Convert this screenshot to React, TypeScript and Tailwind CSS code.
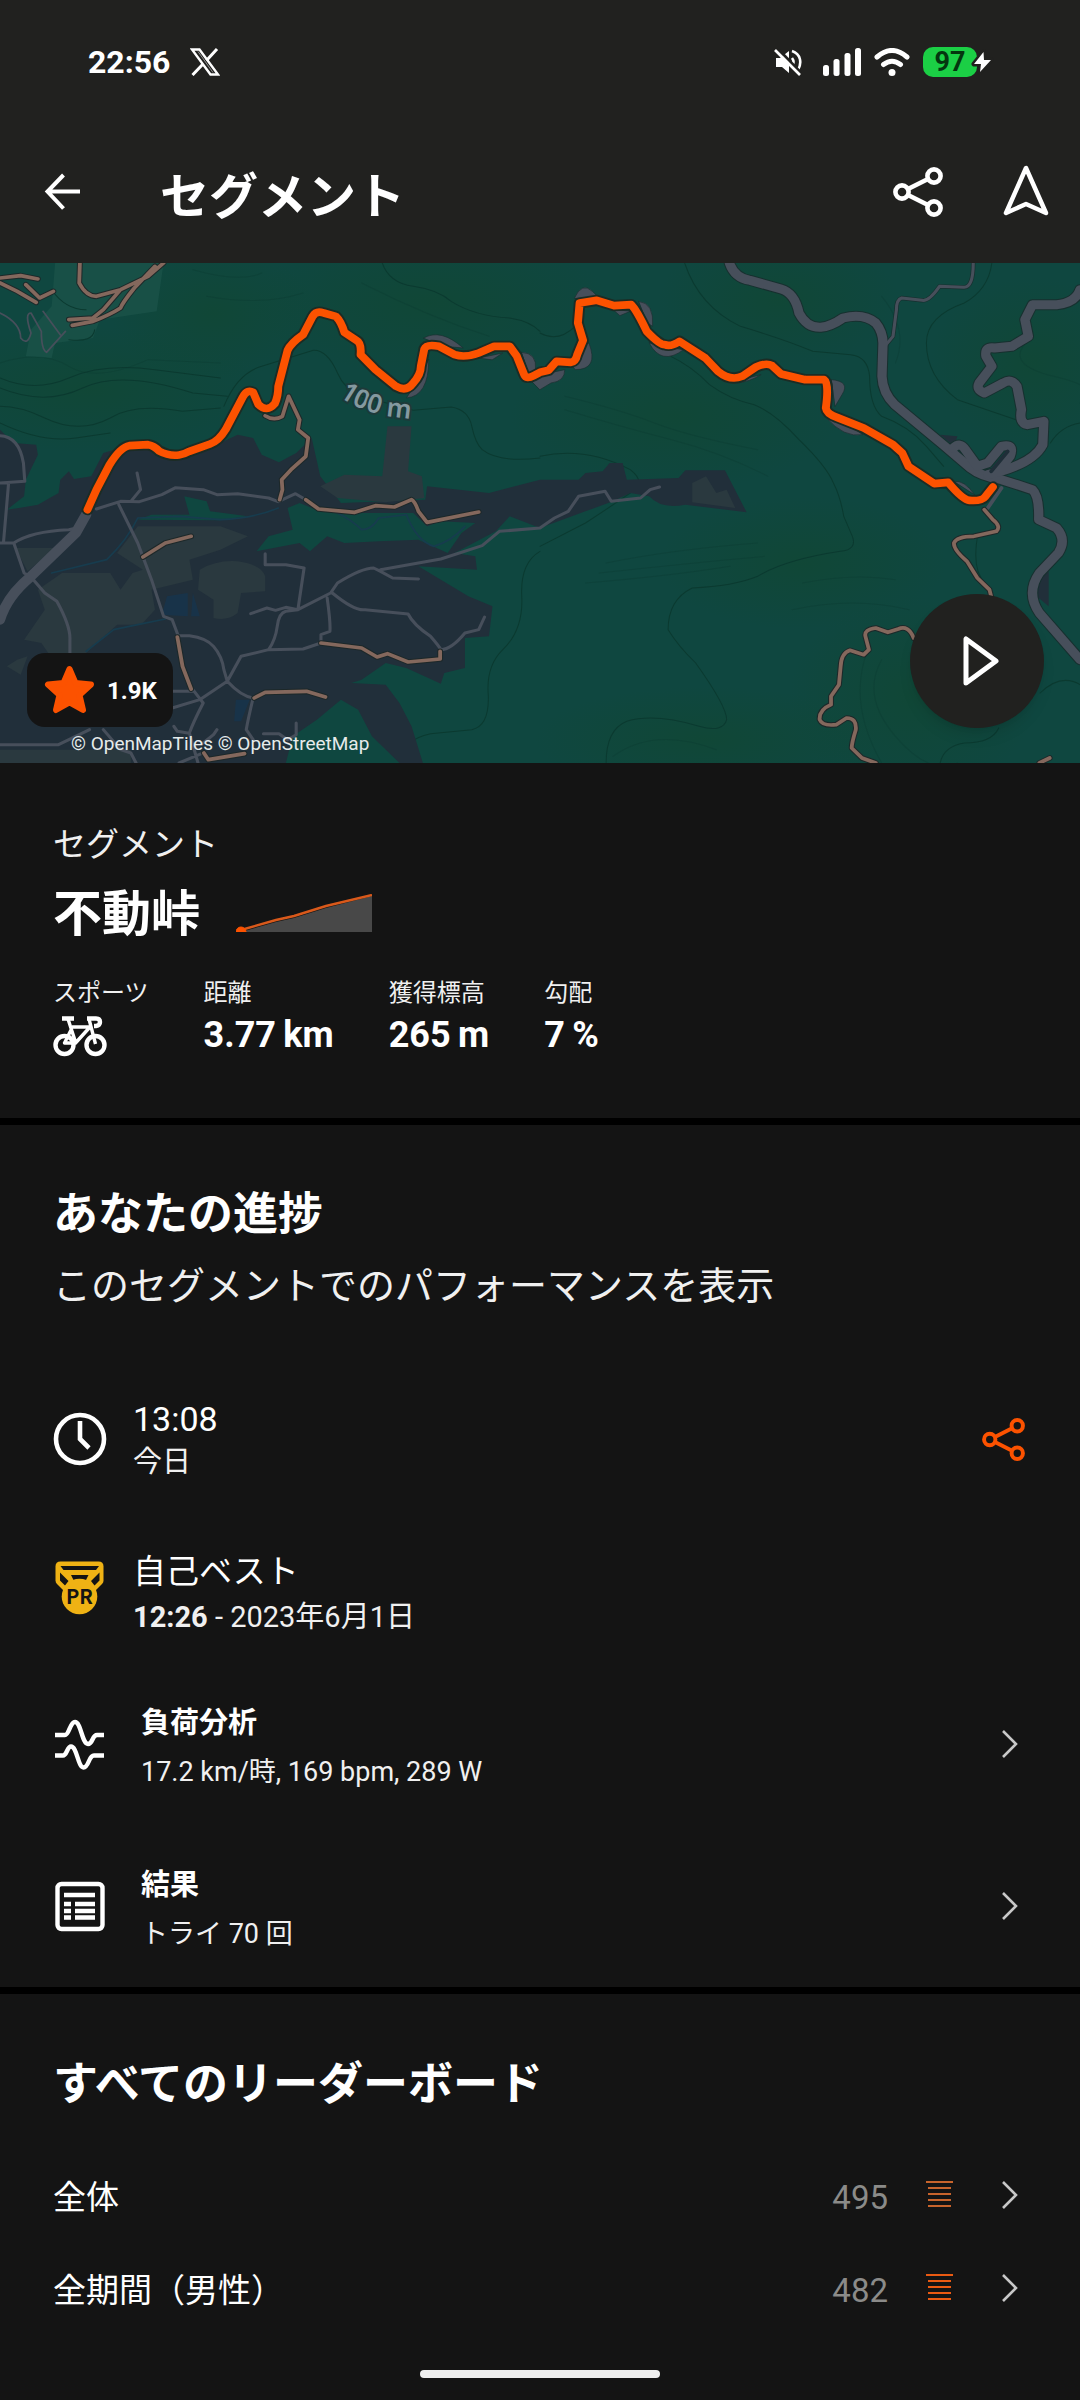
import React from "react";

interface IStat {
  label: string;
  value: React.ReactNode;
}

interface ILeaderboard {
  name: string;
  rank: number;
  lineColor: string;
}

const leaderboards: ILeaderboard[] = [
  { name: "全体", rank: 495, lineColor: "#c8642c" },
  { name: "全期間（男性）", rank: 482, lineColor: "#ea5a12" },
];

const BikeIcon = () => (
  <svg width="54" height="46" viewBox="0 0 54 46" fill="none" stroke="#fff" strokeWidth="4.400">
    <circle cx="11.500" cy="33" r="9" />
    <circle cx="42.500" cy="33" r="9" />
    <path d="M9 6.500h12M34 6.500h9q4 0 4 3.500t-4 4h-2" />
    <path d="M15 7l7.500 23M36 7l6.500 25M19 15h18M37 15 22.500 31H11.500l7-14" strokeWidth="3.400" strokeLinejoin="round" />
  </svg>
);

const ShareIcon = ({ className }: { className: string }) => (
  <svg className={className} viewBox="0 0 50 50" fill="none" stroke="currentColor" strokeWidth="4.600">
    <circle cx="9" cy="25" r="6.600" />
    <circle cx="41" cy="9" r="6.600" />
    <circle cx="41" cy="41" r="6.600" />
    <path d="m15 22 20-10M15 28l20 10" />
  </svg>
);

const ChevronIcon = () => (
  <svg width="18" height="30" viewBox="0 0 18 30" fill="none" stroke="#c8c8c8" strokeWidth="2.600">
    <path d="M2 2l13 13L2 28" />
  </svg>
);

const StatusBar = () => (
  <div className="flex h-[124px] items-center justify-between pl-[88px] pr-[86px]">
    <div className="flex items-center gap-5">
      <span className="text-[32px] leading-8 font-bold">22:56</span>
      <svg width="30" height="28" viewBox="0 0 30 28" fill="none" stroke="#fff">
        <path d="M2 1.500h7.500L28 26.500h-7.500z" strokeWidth="2.400" />
        <path d="M27 1 16.500 12.500M13 16 2.500 27" strokeWidth="3" />
        <path d="m8 3.500 15 21" strokeWidth="1" opacity=".5" />
      </svg>
    </div>
    <div className="flex items-center">
      <svg className="mr-[21px]" width="28" height="28" viewBox="0 0 28 28" fill="none" stroke="#fff">
        <path d="M2 10h4l9-7v22l-7-6H2z" fill="#fff" stroke="none" />
        <path d="M18 10q3 4 0 8M18 3c9 3 10 12 6 19" strokeWidth="2.600" />
        <path d="M3 0 28 26" stroke="#21211f" strokeWidth="3" />
        <path d="M1 2l25 25" strokeWidth="2.600" />
      </svg>
      <svg className="mr-3" width="38" height="28" viewBox="0 0 38 28" fill="#fff">
        <rect x="0" y="17" width="6" height="11" rx="2.500" />
        <rect x="10.500" y="11" width="6" height="17" rx="2.500" />
        <rect x="21.500" y="5" width="6" height="23" rx="2.500" />
        <rect x="32" y="0" width="6" height="28" rx="2.500" />
      </svg>
      <svg className="mr-3" width="38" height="28" viewBox="0 0 38 28" fill="none" stroke="#fff" strokeWidth="5" strokeLinecap="round">
        <path d="M4 9q15-13 30 0M10.500 16.500q8.500-6.500 17 0" />
        <circle cx="19" cy="24.500" r="3.500" fill="#fff" stroke="none" />
      </svg>
      <span className="flex h-[30px] w-[54px] items-center justify-center rounded-[10px] bg-[#1bcf45] text-[27px] leading-[30px] font-bold text-[#04360f]">
        97
      </span>
      <svg className="-ml-[7px]" width="24" height="26" viewBox="0 0 24 26">
        <path d="M13.500 3 4 15h7l-1 8 11-12h-7z" fill="#fff" stroke="#21211f" strokeWidth="5" strokeLinejoin="round" paintOrder="stroke" />
      </svg>
    </div>
  </div>
);

const Header = () => (
  <header className="bg-[#21211f]">
    <StatusBar />
    <div className="flex h-[139px] items-start pr-[31px] pl-[44px] pt-[41px]">
      <button type="button" aria-label="戻る" className="mt-2">
        <svg width="38" height="38" viewBox="0 0 38 38" fill="none" stroke="#fff" strokeWidth="4">
          <path d="M19.500 2 3.500 18.500l16 17M3.500 18.500H36" />
        </svg>
      </button>
      <h1 className="ml-[78px] flex-1 text-[49px] leading-[66px] font-bold">セグメント</h1>
      <button type="button" aria-label="共有" className="mt-0.5">
        <ShareIcon className="size-[50px]" />
      </button>
      <button type="button" aria-label="ナビゲーション" className="ml-[60px]">
        <svg width="46" height="52" viewBox="0 0 46 52" fill="none" stroke="#fff" strokeWidth="4.500" strokeLinejoin="round">
          <path d="M23 3 3 48l20-9 20 9z" />
        </svg>
      </button>
    </div>
  </header>
);

const ROUTE =
  "M254 740L280 680 318 605Q350 552 375 548L430 545Q448 548 462 564 490 580 520 576 535 574 550 565L610 543Q635 534 655 500L705 402Q718 378 735 388L750 424Q775 450 798 422 808 400 808 370L835 262Q845 240 880 215L908 160Q918 142 940 150L975 160Q990 175 1000 208L1035 232Q1050 240 1047 275L1090 320 1150 370Q1180 388 1200 360 1222 335 1222 310L1232 258Q1238 242 1275 250L1320 275Q1350 285 1390 270L1435 250 1480 250 1500 278 1522 335Q1528 350 1550 338L1568 328 1593 322 1616 295 1658 298Q1672 295 1676 275L1693 232 1678 180 1683 120 1733 112 1783 128 1833 125Q1848 140 1878 205 1915 245 1930 245 1948 252 1973 235L2048 285 2085 325Q2120 355 2155 340L2195 312Q2225 298 2242 308L2268 333 2338 350 2393 350Q2408 360 2398 435 2400 452 2430 463L2508 495 2593 545 2620 570 2638 610 2713 662 2753 658Q2795 710 2815 712 2850 715 2860 702L2883 672";

const MINOR_ROADS =
  "M0 518Q55 520 68 600L72 655 0 660M25 660 10 840H40L70 930 90 942M0 840H20M40 840Q90 805 200 800L222 795M280 738 350 715 405 716 470 695 510 674 590 680 630 695 690 692 780 705 808 716 858 692 888 710M398 630 408 680 380 715M345 725 400 840 440 950 475 1060 500 1070 518 1120M518 1118 550 1118Q600 1125 620 1150 645 1180 650 1220L660 1255M0 1445H170L260 1400M300 1400 350 1460 380 1470 395 1500M90 942 130 990 165 1015Q205 1090 203 1130V1170M500 1335 580 1310 660 1255 700 1180 780 1160Q800 1130 805 1090 810 1050 830 1045L865 1040 960 990 980 960Q1050 915 1085 915L1105 925 1140 945 1215 948M1105 920 1280 888 1400 848 1450 805 1568 795 1610 765 1650 745 1680 700 1757 685 1775 715 1860 705 1888 680 1915 672M770 872V905L830 905 883 915 865 1040M728 1052 775 1035 800 1042 830 1033 865 1040M965 990Q1030 1045 1060 1040L1185 1053Q1200 1085 1250 1120 1275 1150 1280 1160 1310 1160 1350 1110L1390 1100 1407 1062M950 1005Q960 1080 958 1105L932 1115V1140L880 1158 780 1160M660 1255Q700 1300 735 1305 720 1370 715 1400L735 1430M560 1280 590 1320Q560 1380 550 1410L575 1500M500 1285H560M590 1440 620 1415 630 1400M765 1412H810L835 1430 860 1415V1380M520 1500 590 1470M505 1390 515 1405 545 1410";

const TRAILS =
  "M770 458Q795 475 820 460L838 400 870 470 865 500 895 525 888 580 845 620 818 650 820 680 812 710M888 710 925 738 1030 748 1090 728 1145 732 1195 710Q1205 715 1215 745L1240 778 1390 747M415 882 480 840 555 820M515 1122 530 1210 555 1278M932 1140 1050 1155 1095 1182 1125 1172 1185 1197 1278 1188V1165M738 1305 770 1288 890 1285 945 1302M592 1470 605 1490 710 1472M0 45 60 38 110 48M0 60 50 85 105 118M75 65 115 105 155 85M232 0 230 60Q250 100 280 100L350 80 430 40 475 0M350 80 300 140 270 165 200 170M450 10 390 75Q355 120 350 135 320 155 270 175L210 187";

const RIGHT_TRAILS =
  "M1290 740 1315 770Q1340 790 1325 805L1260 820Q1210 820 1202 840 1200 860 1240 895L1270 945 1305 980 1310 1000M1085 1125Q1070 1085 1040 1098L1010 1108 975 1095Q940 1100 945 1120L955 1160 940 1175 900 1162Q875 1170 873 1210L868 1265 845 1300V1325Q810 1340 812 1370 820 1390 860 1385L890 1365Q920 1365 917 1400 905 1440 905 1455L935 1485 975 1500M1450 1500 1480 1485";

const SegmentMap = () => (
  <section className="relative h-[500px] overflow-hidden bg-[#0f4740]">
    <svg className="block size-full" viewBox="0 0 1080 500" preserveAspectRatio="xMidYMid slice">
      <defs>
        <radialGradient id="forest">
          <stop offset="0" stopColor="#114730" stopOpacity=".6" />
          <stop offset="1" stopColor="#114730" stopOpacity="0" />
        </radialGradient>
      </defs>
      <g transform="scale(.34439 .33333)" fill="none" strokeLinecap="round" strokeLinejoin="round">
        {/* terrain shading */}
        <g fill="url(#forest)">
          <ellipse cx="260" cy="380" rx="520" ry="190" />
          <ellipse cx="620" cy="150" rx="300" ry="200" />
          <ellipse cx="1250" cy="120" rx="520" ry="220" />
          <ellipse cx="1960" cy="460" rx="480" ry="220" />
          <ellipse cx="2260" cy="110" rx="350" ry="200" />
          <ellipse cx="2330" cy="900" rx="420" ry="200" />
          <ellipse cx="2050" cy="1430" rx="500" ry="160" />
          <ellipse cx="2650" cy="1300" rx="360" ry="300" />
          <ellipse cx="3000" cy="300" rx="300" ry="260" />
        </g>
        <path d="M160 0H475L455 145 290 170 270 225 160 240 150 285 75 280 90 200 150 130Z" fill="#1a5248" opacity=".8" />

        {/* contour lines */}
        <g stroke="#0b3a30" strokeWidth="3">
          <path d="M0 345Q100 390 200 345T450 320L640 345M0 375Q130 430 240 375T560 390L660 400M0 430Q60 430 130 465 230 515 320 465 390 420 530 445L640 435M0 480Q120 540 220 525L320 510M150 80Q190 140 250 140M200 230Q270 240 275 200" />
          <path d="M650 430Q690 330 760 310L910 262Q950 260 980 330 1000 380 1050 400L1200 442 1310 432Q1360 440 1370 490 1380 540 1400 560 1450 600 1568 585M1110 0Q1130 60 1200 70 1270 80 1310 115 1380 160 1480 165 1540 175 1568 205" />
          <path d="M1568 865Q1510 900 1515 1000 1520 1100 1460 1160 1410 1210 1418 1300 1420 1390 1370 1400L1250 1412Q1170 1430 1145 1500" />
          <path d="M1988 0Q2030 130 2150 190 2280 230 2360 265L2470 275Q2520 280 2525 340 2525 430 2560 460 2640 490 2690 550L2740 610M1938 275Q2010 310 2060 365 2120 410 2190 425 2250 450 2320 530 2400 610 2420 660 2440 700 2450 760L2475 820Q2490 860 2440 865 2280 890 2200 940 2130 970 2010 975 1940 1010 1940 1100 1970 1150 2020 1200 2110 1330 2110 1370 2100 1410 2030 1390 1900 1350 1820 1375 1760 1400 1760 1500" />
          <path d="M2880 0Q2870 80 2800 120 2690 160 2690 240 2690 340 2780 410L2950 470M1568 580Q1700 550 1830 620 1880 660 1830 690 1760 740 1700 780L1568 850M2840 810Q2820 920 2860 960M2730 1500Q2740 1450 2800 1440 2880 1440 2900 1395M3020 1290Q3080 1230 3136 1265M3050 540Q3080 490 3136 480M1568 210Q1620 240 1670 190" />
          <g opacity=".35">
            <path d="M0 300Q120 260 200 310T430 290L640 300M560 20Q700 60 760 30M600 100Q760 130 880 90M1050 60Q1240 160 1420 220M1640 400Q1800 440 1900 480T2200 560M1640 440Q1800 490 1950 530T2230 640M1760 900Q1950 860 2200 840M1740 930Q2000 900 2220 880M1700 960Q1940 940 2120 910M2330 960Q2480 930 2600 950M2300 1040Q2480 1000 2640 1040M2520 1160Q2460 1320 2560 1500M2560 1190Q2500 1300 2600 1420T2780 1500M1780 1480Q1900 1390 2080 1460M2560 100Q2640 200 2600 300M3000 220Q2900 300 3060 340T3136 420" />
          </g>
        </g>

        {/* fields and villages */}
        <g fill="#212f3a">
          <path d="M0 500 40 540 105 545 110 575 75 650 70 700 20 740 55 735 110 725 170 690 175 650 200 625 215 648 265 640 300 570 380 545 500 580 620 550 690 515 735 525 760 575 810 598 860 570 905 525 930 640 990 720 1235 710 1240 670 1420 690 1568 650 1680 650 1700 630 1750 625 1770 600 1808 600 1820 650 1970 645 1990 622H2105L2168 748 1990 725Q1920 740 1885 700L1830 690 1780 715 1700 745 1568 795 1480 760 1440 805 1320 870 1380 880 1385 920 1215 910 1360 1000 1430 1030 1420 1120 1350 1125 1350 1215 1290 1230 1280 1262 1180 1215 1120 1200 1050 1250 1020 1260 1120 1265 1160 1320 1195 1390 1228 1500H0Z" />
        </g>
        <g fill="#0f4740">
          <path d="M745 865 780 820 850 800 835 735 870 720 930 745 1000 750 1100 750 1200 750 1240 790 1280 775 1380 780 1340 810 1300 870 1215 830 1100 835 1000 840 950 820 900 865 870 840ZM400 770 440 755 550 755 535 700 600 715 610 745 720 760 640 772ZM850 1420 920 1370 990 1310 1040 1340 1080 1420 1160 1500H830Z" />
        </g>
        <g fill="#2a393f">
          <path d="M340 870 400 790 560 790 640 790 720 820 640 860 550 890 560 950 440 980 450 1040 410 1085 340 1085 250 1170 140 1170 120 1140 70 1130 130 1040 110 980 180 930 320 930 350 980 385 930 415 920ZM580 920Q630 890 690 895 760 905 770 940L770 985 700 990 690 1050Q660 1075 620 1065L620 1010 575 980ZM930 670 1000 635 1110 640 1125 490H1195L1185 625 1225 640 1232 705 1120 718 980 705ZM45 855H160L80 925ZM50 1190 20 1210 60 1235 80 1180ZM0 1460H380V1500H0ZM2010 660 2050 640 2080 690 2110 680 2135 735 2010 718Z" />
        </g>
        <g fill="#17344e" opacity=".8">
          <path d="M485 1000 545 990V1060L470 1055ZM560 990 580 1060H555ZM685 1310H725L700 1375H680Z" />
        </g>
        <path d="M808 735Q740 765 640 770L520 760 400 765Q370 830 310 890L150 930M980 750Q1020 770 1050 800 1080 800 1100 765L1180 755Q1210 835 1260 850 1310 835 1350 790M250 1165 330 1100 400 1085 480 1068" stroke="#173c4e" strokeWidth="5" />
        <path d="M3010 920 3045 925V1030L3010 1000ZM2730 515 2780 520 2770 550Z" fill="#212f3a" />

        {/* roads */}
        <g stroke="#474f5b">
          <path d={MINOR_ROADS} strokeWidth="9" />
          <path d="M0 1070Q20 1000 90 940L220 810 250 755" strokeWidth="30" />
          <path d="M0 150Q60 180 60 225 80 250 90 210 70 150 90 150L120 205Q120 260 135 268L190 205M125 145 175 215" strokeWidth="5" />
        </g>
        <g fill="#474f5b" stroke="#17302f" strokeWidth="2">
          <path d="M1230 225Q1280 195 1345 255L1290 250ZM1245 290Q1245 400 1180 405L1215 350ZM1390 285 1460 270 1430 290ZM1515 268Q1560 270 1555 320L1535 330ZM1540 350 1570 335 1640 320Q1640 355 1600 360L1568 380ZM1668 105Q1690 55 1720 85L1740 105ZM1675 250 1710 240Q1740 320 1670 320L1660 305ZM1855 115Q1900 120 1895 190L1880 180ZM1885 240Q1920 310 1985 260L1920 250ZM2415 350Q2470 355 2445 395L2425 430ZM2400 465Q2450 525 2505 515L2450 475ZM1780 140 1800 158 1830 145ZM2080 340Q2140 380 2210 335L2150 350ZM2770 655Q2800 650 2830 695Z" />
        </g>
        <g transform="translate(1568)">
          {["#17302f", "#474f5b"].map((color, i) => (
            <g key={color} stroke={color}>
              <path d="M1258 0Q1258 75 1230 73L1160 70Q1130 115 1110 112L1050 105Q1035 110 1035 140L1025 220 1005 245" strokeWidth={i ? 9 : 13} />
              <path d="M550 0Q565 45 610 52L700 78Q740 90 752 150 775 195 815 193 845 190 880 165 940 150 975 180 995 205 996 240L993 340Q995 390 1030 425L1170 545 1250 615Q1280 640 1340 650L1430 680Q1450 700 1448 770L1500 795Q1530 830 1505 870L1450 930Q1410 990 1450 1050L1568 1190" strokeWidth={i ? 27 : 33} />
              <path d="M1300 635Q1430 605 1460 545L1463 475 1415 485Q1390 480 1398 440L1385 370Q1370 345 1345 360L1290 390Q1265 380 1275 360L1312 310 1295 280Q1290 250 1320 255L1370 250 1418 220 1408 170 1430 125 1500 125Q1555 120 1568 80M1200 555Q1220 535 1235 560L1270 610 1300 600 1340 550Q1380 540 1365 580L1330 625" strokeWidth={i ? 27 : 33} />
            </g>
          ))}
          <path d="M1310 625 1358 565" stroke="#1f2e38" strokeWidth="11" />
          <path d="M1340 675 1300 735" stroke="#474f5b" strokeWidth="11" />
        </g>
        {["#1d2829", "#84685d"].map((color, i) => (
          <g key={color} stroke={color} strokeWidth={i ? 11 : 17}>
            <path d={TRAILS} />
            <path d={RIGHT_TRAILS} transform="translate(1568)" />
          </g>
        ))}

        <path d={ROUTE} stroke="#1c2c25" strokeWidth="34" />
        <path d={ROUTE} stroke="#fc5200" strokeWidth="23" />
      </g>
      <path id="elevationLabel" d="M339 133Q368 155 420 156" fill="none" />
      <text
        className="font-['Noto_Sans'] text-[26px] font-semibold"
        fill="#8499a0"
        stroke="#1d3a3a"
        strokeWidth="4"
        paintOrder="stroke"
      >
        <textPath href="#elevationLabel">100 m</textPath>
      </text>
    </svg>

    <div className="absolute bottom-[36px] left-[27px] flex h-[74px] items-center gap-[11px] rounded-[18px] bg-[#141414] px-4">
      <svg width="53" height="52" viewBox="0 0 53 52">
        <path d="M26.500 5 32.500 19 48 20.500 36.500 31 40 46 26.500 38.500 13 46l3.500-15L5 20.500 20.500 19z" fill="#fc5200" stroke="#fc5200" strokeWidth="6" strokeLinejoin="round" />
      </svg>
      <span className="pt-0.5 text-[24px] leading-8 font-bold">1.9K</span>
    </div>
    <p className="absolute bottom-[5px] left-[71px] text-[19px] leading-7 text-[#e6ebeb]">
      © OpenMapTiles © OpenStreetMap
    </p>
    <button
      type="button"
      aria-label="再生"
      className="absolute right-[36px] bottom-[35px] flex size-[134px] items-center justify-center rounded-full bg-[#21211f] shadow-lg"
    >
      <svg className="ml-2" width="38" height="52" viewBox="0 0 38 52" fill="none" stroke="#fff" strokeWidth="5" strokeLinejoin="round">
        <path d="M4 4v44l30-22z" />
      </svg>
    </button>
  </section>
);

const stats: IStat[] = [
  { label: "スポーツ", value: <BikeIcon /> },
  { label: "距離", value: "3.77\u2009km" },
  { label: "獲得標高", value: "265\u2009m" },
  { label: "勾配", value: "7\u2009%" },
];

const SegmentSummary = () => (
  <section className="border-b-[7px] border-black px-[53px] pt-[60px] pb-[59px]">
    <p className="text-[33px] leading-[44px] text-[#f0f0f0]">セグメント</p>
    <div className="mt-3 flex items-center gap-[36px]">
      <h2 className="text-[49px] leading-[72px] font-bold">不動峠</h2>
      <svg className="mb-1" width="136" height="38" viewBox="0 0 136 38">
        <path d="M5 38 40 28 58 24 90 14 136 2V38z" fill="#484848" />
        <path d="M5 36 40 26 58 22 90 12 136 1" fill="none" stroke="#d9591b" strokeWidth="2.500" />
        <path d="M0 38a5 5 0 0 1 10 0z" fill="#fc5200" stroke="#fc5200" />
      </svg>
    </div>
    <dl className="mt-6 flex gap-[55px]">
      {stats.map((stat) => (
        <div key={stat.label}>
          <dt className="text-[24px] leading-9 text-[#f0f0f0]">{stat.label}</dt>
          <dd className="flex h-[48px] items-center text-[36px] leading-[48px] font-bold">{stat.value}</dd>
        </div>
      ))}
    </dl>
  </section>
);

const ClockIcon = () => (
  <svg width="54" height="54" viewBox="0 0 54 54" fill="none" stroke="#fff" strokeWidth="4.600">
    <circle cx="27" cy="27" r="24" />
    <path d="M27 9v18l9 9" />
  </svg>
);

const MedalIcon = () => (
  <svg width="54" height="54" viewBox="0 0 54 54">
    <path d="M7.500.500h38q5 0 5 5v14q0 2-1.500 3.500L42 30H11l-7-7q-1.500-1.500-1.500-3.500v-14q0-5 5-5z" fill="#efb214" />
    <path d="M7.500 5h38.500L43 9H10.500zM18 14h17.500L33 19H20.500zM7 11.500 15.500 20 12 24.500 7 19.500zM46.500 11.500 38 20l3.500 4.500 5-5z" fill="#141414" />
    <circle cx="26.500" cy="35.500" r="17.800" fill="#efb214" />
    <text x="26.500" y="43" textAnchor="middle" className="font-['Noto_Sans_CJK_JP'] text-[20px] font-bold" fill="#141414">
      PR
    </text>
  </svg>
);

const WaveIcon = () => (
  <svg width="54" height="54" viewBox="0 0 54 54" fill="none" stroke="#fff" strokeWidth="4.400" strokeLinejoin="round">
    <path d="M2 18h10c4 0 5-13 10-13 6 0 7 22 13 22 5 0 4-9 9-9h7" />
    <path d="M2 38.500h8c4 0 4-9 8-9 6 0 7 21 12.500 21 5.500 0 5-12 10.500-12h10" />
  </svg>
);

const ResultsIcon = () => (
  <svg width="54" height="54" viewBox="0 0 54 54" fill="none" stroke="#fff" strokeWidth="4.400">
    <rect x="4.500" y="5" width="45" height="45" rx="4" />
    <path d="M11 16h31M11 25h7M22 25h20M11 32h7M22 32h20M11 38.500h7M22 38.500h20" />
  </svg>
);

interface IAnalysisRow {
  icon: React.ReactNode;
  title: string;
  detail: string;
}

const AnalysisRow: React.FC<IAnalysisRow> = ({ icon, title, detail }) => (
  <a href="#" className="flex h-[162px] items-center pr-[61px] pl-[53px]">
    {icon}
    <div className="ml-[34px] flex-1 pt-1.5">
      <p className="text-[29px] leading-[50px] font-bold">{title}</p>
      <p className="text-[27px] leading-[48px] text-[#f0f0f0]">{detail}</p>
    </div>
    <ChevronIcon />
  </a>
);

const Progress = () => (
  <section className="border-b-[7px] border-black pt-[56px]">
    <h2 className="px-[53px] text-[45px] leading-[68px] font-bold">あなたの進捗</h2>
    <p className="mt-2 px-[53px] text-[38px] leading-[58px] text-[#f0f0f0]">
      このセグメントでのパフォーマンスを表示
    </p>

    <div className="mt-[51px] flex h-[146px] items-center pr-[55px] pl-[53px]">
      <ClockIcon />
      <div className="ml-[26px] flex-1 pt-1">
        <p className="text-[34px] leading-[42px]">13:08</p>
        <p className="text-[29px] leading-[44px] text-[#f0f0f0]">今日</p>
      </div>
      <button type="button" aria-label="共有" className="text-[#fc5200]">
        <ShareIcon className="size-[43px]" />
      </button>
    </div>

    <div className="flex h-[151px] items-center pl-[53px]">
      <MedalIcon />
      <div className="ml-[26px] pt-3">
        <p className="text-[33px] leading-[46px]">自己ベスト</p>
        <p className="text-[29px] leading-[44px] text-[#f0f0f0]">
          <span className="font-bold">12:26</span> - 2023年6月1日
        </p>
      </div>
    </div>

    <AnalysisRow icon={<WaveIcon />} title="負荷分析" detail="17.2 km/時, 169 bpm, 289 W" />
    <AnalysisRow icon={<ResultsIcon />} title="結果" detail="トライ 70 回" />
  </section>
);

const Leaderboards = () => (
  <section className="pt-[57px]">
    <h2 className="px-[53px] text-[45px] leading-[68px] font-bold">すべてのリーダーボード</h2>
    <div className="mt-[29px]">
      {leaderboards.map((board) => (
        <a key={board.name} href="#" className="flex h-[93px] items-center pr-[61px] pl-[53px]">
          <span className="flex-1 pt-1.5 text-[33px] leading-[48px]">{board.name}</span>
          <span className="pt-1.5 text-[33px] leading-[48px] text-[#8b8b89]">{board.rank}</span>
          <svg className="mr-[48px] ml-[38px]" width="27" height="27" viewBox="0 0 27 27" stroke={board.lineColor} strokeWidth="2">
            <path d="M0 1h27M2 7h23M2 13h23M2 19h23M2 25h23" />
          </svg>
          <ChevronIcon />
        </a>
      ))}
    </div>
  </section>
);

const App: React.FC = () => {
  return (
    <div
      lang="ja"
      className="flex min-h-screen flex-col bg-[#141414] font-['Roboto','Noto_Sans_CJK_JP',sans-serif] text-white"
    >
      <Header />
      <main className="flex-1">
        <SegmentMap />
        <SegmentSummary />
        <Progress />
        <Leaderboards />
      </main>
      <div className="mx-auto mb-[22px] h-2 w-[240px] rounded-full bg-[#eeeeee]" />
    </div>
  );
};

export default App;
